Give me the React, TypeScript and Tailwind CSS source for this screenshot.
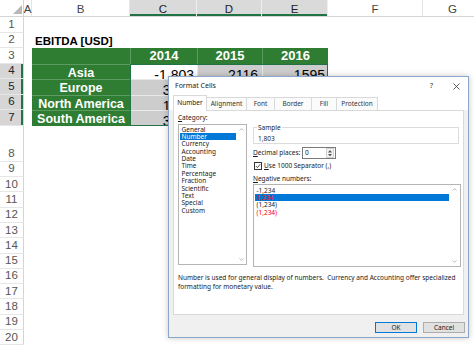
import React from "react";

function RH({ n, sel, h }: { n?: number; sel?: boolean; h: string }) {
  return (
    <div
      className={`${h} w-[24px] shrink-0 flex items-center justify-center text-[11.5px] border-r border-[#d4d4d4] border-b border-b-[#e6e6e6] ${
        sel ? "bg-[#d6d6d6] text-[#222] shadow-[inset_-2px_0_0_#217346]" : "text-[#555]"
      }`}
    >
      {n}
    </div>
  );
}

function ColHead({ label, w, sel }: { label: string; w: string; sel?: boolean }) {
  return (
    <div
      className={`${w} shrink-0 h-full flex justify-center pt-[3px] text-[11.5px] leading-[13px] border-r ${
        sel
          ? "bg-[#dadada] text-[#222] border-[#eeeeee] shadow-[inset_0_-2px_0_#217346]"
          : "text-[#444] border-[#e4e4e4]"
      }`}
    >
      {label}
    </div>
  );
}

function Label({ text }: { text: string }) {
  return (
    <div className="w-[98px] shrink-0 h-full bg-[#2e7d32] border-t border-[#5c9a60] flex justify-center pt-[1px] text-[12.5px] leading-[15px] font-bold text-white whitespace-nowrap overflow-hidden">
      {text}
    </div>
  );
}

function Num({ v, w, pr, white }: { v: string; w: string; pr: string; white?: boolean }) {
  return (
    <div
      className={`${w} ${pr} shrink-0 h-full overflow-hidden border-t border-l border-[#e9e9e9] flex justify-end pt-[3px] text-[14px] leading-[14px] text-black ${
        white ? "bg-white" : "bg-[#cdcdcd]"
      }`}
    >
      {v}
    </div>
  );
}

function Up() {
  return (
    <svg width="5" height="3" viewBox="0 0 5 3">
      <path d="M0.5 2.6 L2.5 0.6 L4.5 2.6" fill="none" stroke="#a8a8a8" strokeWidth="0.8" />
    </svg>
  );
}
function Down() {
  return (
    <svg width="5" height="3" viewBox="0 0 5 3">
      <path d="M0.5 0.4 L2.5 2.4 L4.5 0.4" fill="none" stroke="#a8a8a8" strokeWidth="0.8" />
    </svg>
  );
}

function Dialog() {
  const cats = [
    "General",
    "Number",
    "Currency",
    "Accounting",
    "Date",
    "Time",
    "Percentage",
    "Fraction",
    "Scientific",
    "Text",
    "Special",
    "Custom",
  ];
  const tabs: [string, string][] = [
    ["Alignment", "w-[40px]"],
    ["Font", "w-[28px]"],
    ["Border", "w-[37px]"],
    ["Fill", "w-[25px]"],
    ["Protection", "w-[41px]"],
  ];
  return (
    <div className="absolute left-[168px] top-[76px] w-[301px] h-[262px] border border-[#8aa6c8] bg-[#f0f0f0] flex flex-col shadow-[0_0_6px_rgba(0,0,0,0.22)] font-['Noto_Sans',sans-serif] text-[#1a1a1a] text-[6.5px]">
      <div className="h-[18px] shrink-0 bg-white flex items-center">
        <span className="pl-[6px] text-[7px]">Format Cells</span>
        <span className="ml-auto text-[7.5px] text-[#333]">?</span>
        <svg className="ml-[20px] mr-[8px]" width="7" height="7" viewBox="0 0 7 7">
          <path d="M0.5 0.5 L6.5 6.5 M6.5 0.5 L0.5 6.5" stroke="#333" strokeWidth="0.8" />
        </svg>
      </div>
      <div className="h-[15px] shrink-0 bg-white flex items-end pl-[4px]">
        <div className="relative z-10 w-[34px] h-[16px] -mb-px bg-white border-l border-t border-r border-[#d9d9d9] flex items-center justify-center pb-[1px]">
          Number
        </div>
        {tabs.map(([t, w]) => (
          <div
            key={t}
            className={`${w} h-[13px] bg-[#fbfbfb] border-t border-r border-[#d9d9d9] flex items-center justify-center text-[#333]`}
          >
            {t}
          </div>
        ))}
      </div>
      <div className="mx-[4px] h-[205px] shrink-0 bg-white border border-[#d9d9d9] flex flex-col">
        <div className="flex pl-[4px]">
          <div className="w-[69px] shrink-0 flex flex-col">
            <div className="h-[13px] leading-[13px]">
              <span className="underline">C</span>ategory:
            </div>
            <div className="h-[141px] border border-[#b4b4b4] flex">
              <div className="flex-1 pl-[1px] pt-[0.5px] flex flex-col">
                {cats.map((c) => (
                  <div
                    key={c}
                    className={`h-[7.4px] leading-[7.4px] pl-[1.5px] whitespace-nowrap ${
                      c === "Number" ? "bg-[#0078d7] text-white" : ""
                    }`}
                  >
                    {c}
                  </div>
                ))}
              </div>
              <div className="w-[10px] flex flex-col items-center justify-between py-[3px]">
                <Up />
                <Down />
              </div>
            </div>
          </div>
          <div className="ml-[6px] w-[208px] shrink-0 flex flex-col">
            <div className="mt-[16px] mr-[2px] border border-[#dcdcdc] flex flex-col">
              <div className="-mt-[4.5px] ml-[3px] w-fit bg-white px-[1px] leading-[8px]">Sample</div>
              <div className="mt-[3px] ml-[4px] leading-[8px]">1,803</div>
            </div>
            <div className="mt-[3.5px] h-[12px] flex items-center">
              <div className="w-[49px] shrink-0">
                <span className="underline">D</span>ecimal places:
              </div>
              <div className="w-[34px] h-[12px] border border-[#7a7a7a] flex items-center">
                <span className="pl-[2px] flex-1">0</span>
                <div className="w-[8px] h-[10px] mr-[1px] border border-[#cfcfcf] bg-[#f4f4f4] flex flex-col items-center justify-center gap-[1px]">
                  <svg width="4" height="2.5" viewBox="0 0 4 2.5">
                    <path d="M0 2.5 L2 0 L4 2.5 Z" fill="#555" />
                  </svg>
                  <svg width="4" height="2.5" viewBox="0 0 4 2.5">
                    <path d="M0 0 L2 2.5 L4 0 Z" fill="#555" />
                  </svg>
                </div>
              </div>
            </div>
            <div className="mt-[3px] h-[8px] flex items-center">
              <div className="ml-[1px] w-[8px] h-[8px] border border-[#333] bg-white flex items-center justify-center">
                <svg width="6" height="6" viewBox="0 0 6 6">
                  <path d="M0.8 3 L2.4 4.6 L5.3 1.2" fill="none" stroke="#222" strokeWidth="0.8" />
                </svg>
              </div>
              <div className="ml-[2px] whitespace-nowrap">
                <span className="underline">U</span>se 1000 Separator (,)
              </div>
            </div>
            <div className="mt-[5px] h-[8px] leading-[8px]">
              <span className="underline">N</span>egative numbers:
            </div>
            <div className="mt-[1px] h-[83px] border border-[#b4b4b4] flex">
              <div className="flex-1 pl-[1px] pt-[1.5px] flex flex-col">
                <div className="h-[7.4px] leading-[7.4px] pl-[1.5px]">-1,234</div>
                <div className="h-[7.4px] leading-[7.4px] pl-[1.5px] bg-[#0078d7] text-[#ff1010]">1,234</div>
                <div className="h-[7.4px] leading-[7.4px] pl-[1.5px]">(1,234)</div>
                <div className="h-[7.4px] leading-[7.4px] pl-[1.5px] text-[#ff0000]">(1,234)</div>
              </div>
              <div className="w-[11px] flex flex-col items-center justify-between py-[3px]">
                <Up />
                <Down />
              </div>
            </div>
          </div>
        </div>
        <div className="mt-[5.5px] pl-[4px] leading-[9px] whitespace-nowrap">
          <div>Number is used for general display of numbers.&nbsp; Currency and Accounting offer specialized</div>
          <div>formatting for monetary value.</div>
        </div>
      </div>
      <div className="flex-1 flex justify-end items-start pt-[7px] pr-[3px] gap-[6px]">
        <div className="w-[42px] h-[11px] border border-[#0078d7] bg-[#e1e1e1] flex items-center justify-center">OK</div>
        <div className="w-[42px] h-[11px] border border-[#adadad] bg-[#e1e1e1] flex items-center justify-center">Cancel</div>
      </div>
    </div>
  );
}

export default function App() {
  const low = [8, 9, 10, 11, 12, 13, 14, 15, 16, 17, 18, 19, 20];
  return (
    <div className="relative w-[474px] h-[345px] overflow-hidden bg-white font-['Liberation_Sans',Arial,sans-serif]">
      {/* column headers */}
      <div className="flex h-[17px] border-b border-[#d4d4d4]">
        <div className="w-[24px] shrink-0 border-r border-[#d4d4d4] flex items-end justify-end pb-[2px] pr-[1px]">
          <svg width="9" height="9" viewBox="0 0 9 9">
            <polygon points="9,0 9,9 0,9" fill="#b8b8b8" />
          </svg>
        </div>
        <ColHead label="A" w="w-[8px]" />
        <ColHead label="B" w="w-[98px]" />
        <ColHead label="C" w="w-[67px]" sel />
        <ColHead label="D" w="w-[65px]" sel />
        <ColHead label="E" w="w-[66px]" sel />
        <ColHead label="F" w="w-[95px]" />
        <ColHead label="G" w="w-[60px]" />
      </div>

      {/* row 1 */}
      <div className="flex h-[15.5px]">
        <RH n={1} h="h-[15.5px]" />
      </div>
      {/* row 2 */}
      <div className="flex h-[15.5px]">
        <RH n={2} h="h-[15.5px]" />
        <div className="w-[8px] shrink-0" />
        <div className="pl-[3px] pt-[2.7px] text-[11.5px] leading-[13px] font-bold text-black whitespace-nowrap">
          EBITDA [USD]
        </div>
      </div>
      {/* row 3 */}
      <div className="flex h-[15.5px]">
        <RH n={3} h="h-[15.5px]" />
        <div className="w-[8px] shrink-0" />
        <div className="w-[98px] shrink-0 h-full bg-[#2e7d32]" />
        {[
          ["2014", "w-[67px]"],
          ["2015", "w-[65px]"],
          ["2016", "w-[66px]"],
        ].map(([y, w]) => (
          <div
            key={y}
            className={`${w} shrink-0 h-full bg-[#2e7d32] border-l border-[#5c9a60] flex justify-center text-[13px] leading-[15.5px] font-bold text-white`}
          >
            {y}
          </div>
        ))}
      </div>
      {/* rows 4-7 */}
      {[
        [4, "Asia", "-1,803", "2116", "1595"],
        [5, "Europe", "3217", "2864", "3012"],
        [6, "North America", "1564", "1720", "1893"],
        [7, "South America", "3348", "3102", "2957"],
      ].map(([n, label, c, d, e]) => (
        <div key={n as number} className="flex h-[15.5px]">
          <RH n={n as number} sel h="h-[15.5px]" />
          <div className="w-[8px] shrink-0" />
          <Label text={label as string} />
          <Num v={c as string} w="w-[67px]" pr="pr-[3px]" white={n === 4} />
          <Num v={d as string} w="w-[65px]" pr="pr-[4px]" />
          <Num v={e as string} w="w-[66px]" pr="pr-[3px]" />
        </div>
      ))}
      {/* gap */}
      <div className="flex h-[21px]">
        <div className="w-[24px] shrink-0 border-r border-[#d4d4d4]" />
      </div>
      {low.map((n) => (
        <div key={n} className="flex h-[15.3px]">
          <RH n={n} h="h-[15.3px]" />
        </div>
      ))}

      {/* selection outline */}
      <div className="absolute left-[130px] top-[63.5px] w-[198px] h-[62px] border border-[#217346] pointer-events-none" />

      <Dialog />
    </div>
  );
}
